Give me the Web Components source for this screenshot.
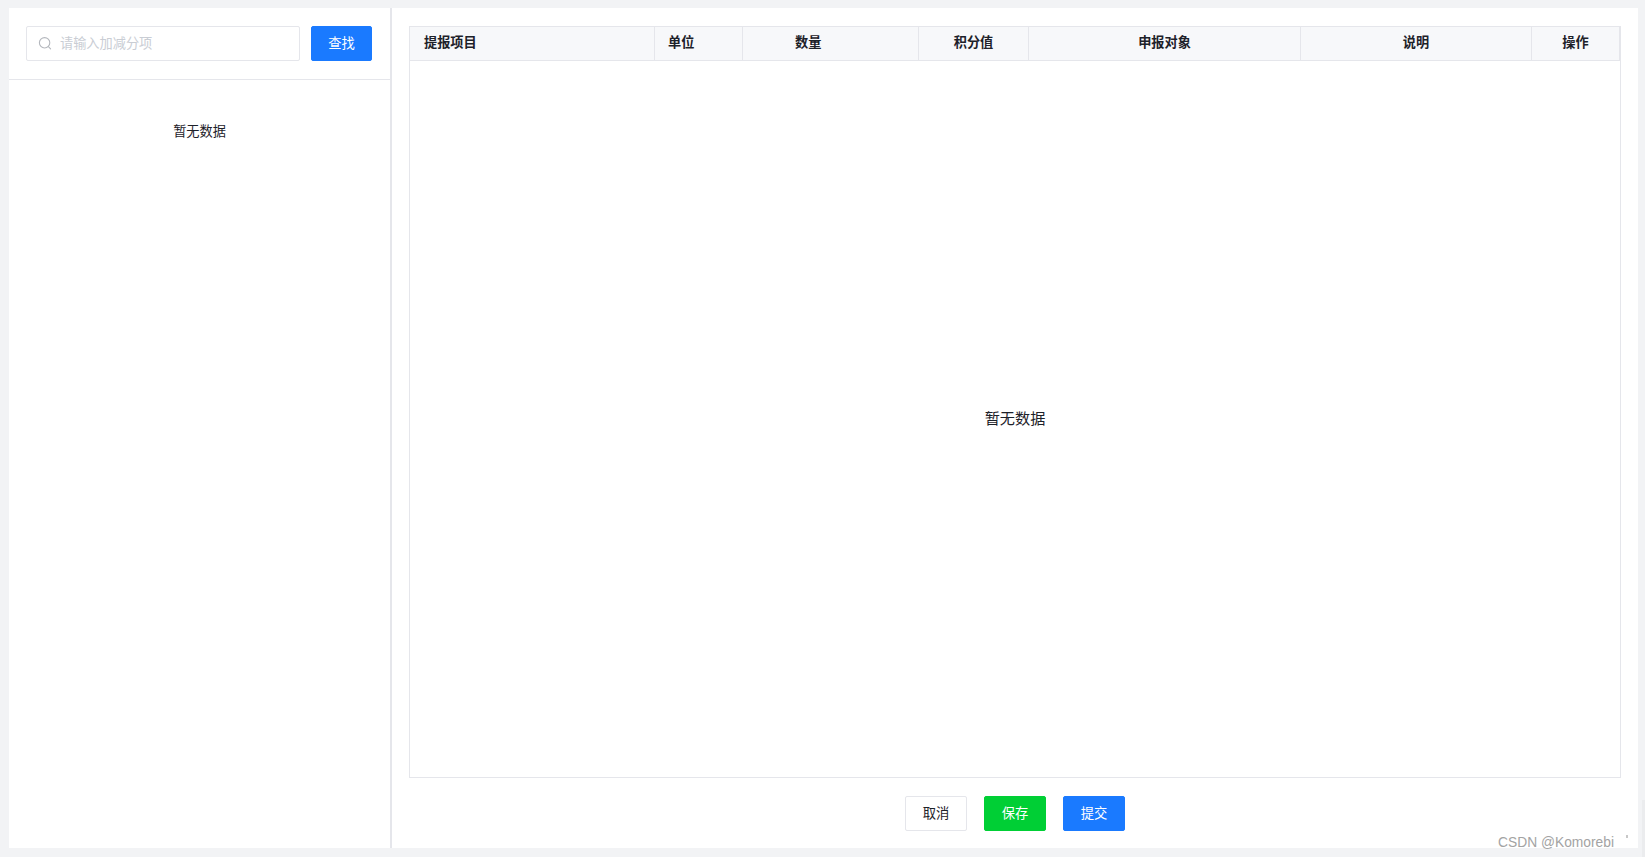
<!DOCTYPE html>
<html lang="zh">
<head>
<meta charset="utf-8">
<title>加减分项</title>
<style>
    html, body { margin: 0; height: 100%; }
    body {
        background: #f2f3f5;
        font-family: "Noto Sans CJK SC", "Liberation Sans", sans-serif;
        color: #1d2129;
        overflow: hidden;
    }
</style>
</head>
<body>
<score-page>
    <side-panel slot="side" placeholder="请输入加减分项" empty="暂无数据"></side-panel>
    <report-table slot="main" empty="暂无数据"></report-table>
    <ui-button slot="actions">取消</ui-button>
    <ui-button slot="actions" variant="success">保存</ui-button>
    <ui-button slot="actions" variant="primary">提交</ui-button>
</score-page>

<script>
class UiButton extends HTMLElement {
    constructor() {
        super();
        this.attachShadow({ mode: 'open' });
    }

    connectedCallback() {
        this.shadowRoot.innerHTML = `
            <style>
                :host { display: inline-block; }
                button {
                    display: block;
                    box-sizing: border-box;
                    width: 62px;
                    height: 35px;
                    padding: 0 0 2px;
                    border: 1px solid #e5e6eb;
                    border-radius: 2px;
                    background: #fff;
                    color: #1d2129;
                    font: 13.3px "Noto Sans CJK SC", sans-serif;
                }
                :host([variant="primary"]) button {
                    background: #1a7aff;
                    border-color: #1a7aff;
                    color: #fff;
                }
                :host([variant="success"]) button {
                    background: #00cf35;
                    border-color: #00cf35;
                    color: #fff;
                }
                :host([narrow]) button { width: 61px; }
            </style>
            <button type="button"><slot></slot></button>
        `;
    }
}

class SearchBox extends HTMLElement {
    constructor() {
        super();
        this.attachShadow({ mode: 'open' });
    }

    connectedCallback() {
        this.shadowRoot.innerHTML = `
            <style>
                :host {
                    display: flex;
                    align-items: center;
                    gap: 8px;
                    box-sizing: border-box;
                    height: 35px;
                    padding: 0 11px 2px;
                    border: 1px solid #e5e6eb;
                    border-radius: 2px;
                    background: #fff;
                }
                svg { flex: none; }
                input {
                    flex: 1;
                    min-width: 0;
                    padding: 0;
                    border: 0;
                    outline: 0;
                    background: transparent;
                    font: 13.2px "Noto Sans CJK SC", sans-serif;
                    color: #1d2129;
                }
                input::placeholder { color: #c9cdd4; opacity: 1; }
            </style>
            <svg width="14" height="14" viewBox="0 0 14 14" fill="none" stroke="#b4b7bd" stroke-width="1.1" stroke-linecap="round">
                <circle cx="6.6" cy="6.8" r="5.2"/>
                <path d="M10.4 10.6 12.6 12.8"/>
            </svg>
            <input type="text" placeholder="${this.getAttribute('placeholder') || ''}">
        `;
    }
}

class SidePanel extends HTMLElement {
    constructor() {
        super();
        this.attachShadow({ mode: 'open' });
    }

    connectedCallback() {
        this.shadowRoot.innerHTML = `
            <style>
                :host {
                    display: flex;
                    flex-direction: column;
                    background: #fff;
                    min-height: 0;
                }
                .search {
                    display: flex;
                    gap: 11px;
                    padding: 18px 18px 18px 17px;
                    border-bottom: 1px solid #e5e6eb;
                }
                search-box { flex: 1; min-width: 0; }
                .empty {
                    padding-top: 41px;
                    text-align: center;
                    font-size: 13.2px;
                    line-height: 19px;
                    color: #1d2129;
                }
            </style>
            <div class="search">
                <search-box placeholder="${this.getAttribute('placeholder') || ''}"></search-box>
                <ui-button variant="primary" narrow>查找</ui-button>
            </div>
            <div class="empty">${this.getAttribute('empty') || ''}</div>
        `;
    }
}

class ReportTable extends HTMLElement {
    constructor() {
        super();
        this.attachShadow({ mode: 'open' });
    }

    connectedCallback() {
        const columns = [
            { title: '提报项目', width: 245, indent: 14 },
            { title: '单位', width: 88, indent: 13 },
            { title: '数量', width: 176, indent: 52 },
            { title: '积分值', width: 110 },
            { title: '申报对象', width: 272 },
            { title: '说明', width: 231 },
            { title: '操作', width: 88 },
        ];
        const cells = columns.map((col) => {
            const style = col.indent ? `justify-content:flex-start;padding-left:${col.indent}px` : '';
            return `<div class="cell" style="${style}">${col.title}</div>`;
        }).join('');
        const template = columns.map((col) => `${col.width}px`).join(' ');
        this.shadowRoot.innerHTML = `
            <style>
                :host {
                    display: flex;
                    flex-direction: column;
                    box-sizing: border-box;
                    min-height: 0;
                    border: 1px solid #e5e6eb;
                    background: #fff;
                }
                .head {
                    display: grid;
                    grid-template-columns: ${template};
                    height: 34px;
                    box-sizing: border-box;
                    border-bottom: 1px solid #e5e6eb;
                    background: #f7f8fa;
                    font-size: 13.2px;
                    font-weight: 700;
                    color: #1d2129;
                }
                .cell {
                    box-sizing: border-box;
                    display: flex;
                    align-items: center;
                    justify-content: center;
                    padding-bottom: 4px;
                    border-right: 1px solid #e5e6eb;
                }
                .body {
                    flex: 1;
                    display: flex;
                    align-items: center;
                    justify-content: center;
                    padding-bottom: 5px;
                    font-size: 15.2px;
                    color: #1d2129;
                }
            </style>
            <div class="head">${cells}</div>
            <div class="body">${this.getAttribute('empty') || ''}</div>
        `;
    }
}

class ScorePage extends HTMLElement {
    constructor() {
        super();
        this.attachShadow({ mode: 'open' });
    }

    connectedCallback() {
        this.shadowRoot.innerHTML = `
            <style>
                :host {
                    display: block;
                    position: relative;
                    box-sizing: border-box;
                    height: 857px;
                    padding: 8px 7px 9px 9px;
                }
                .layout {
                    display: grid;
                    grid-template-columns: 381px 1fr;
                    height: 100%;
                }
                ::slotted([slot="side"]) { height: 840px; }
                .main {
                    display: flex;
                    flex-direction: column;
                    border-left: 2px solid #e5e6eb;
                    min-width: 0;
                    padding: 18px 17px 17px;
                    background: #fff;
                }
                ::slotted([slot="main"]) { flex: 1; }
                .actions {
                    display: flex;
                    justify-content: center;
                    gap: 17px;
                    margin-top: 18px;
                }
                .mark {
                    position: absolute;
                    right: 31px;
                    bottom: 5px;
                    font: 13.8px/18px "Liberation Sans", sans-serif;
                    color: #a3a3a3;
                }
                .dot {
                    position: absolute;
                    right: 17px;
                    bottom: 19px;
                    width: 2px;
                    height: 3px;
                    background: #c8c8c8;
                }
                .edge {
                    position: absolute;
                    right: 0;
                    top: 800px;
                    bottom: 0;
                    width: 3px;
                    background: #ebecee;
                }
            </style>
            <div class="layout">
                <slot name="side"></slot>
                <div class="main">
                    <slot name="main"></slot>
                    <div class="actions"><slot name="actions"></slot></div>
                </div>
            </div>
            <div class="mark">CSDN @Komorebi</div>
            <div class="dot"></div>
            <div class="edge"></div>
        `;
    }
}

customElements.define('ui-button', UiButton);
customElements.define('search-box', SearchBox);
customElements.define('side-panel', SidePanel);
customElements.define('report-table', ReportTable);
customElements.define('score-page', ScorePage);
</script>
</body>
</html>
